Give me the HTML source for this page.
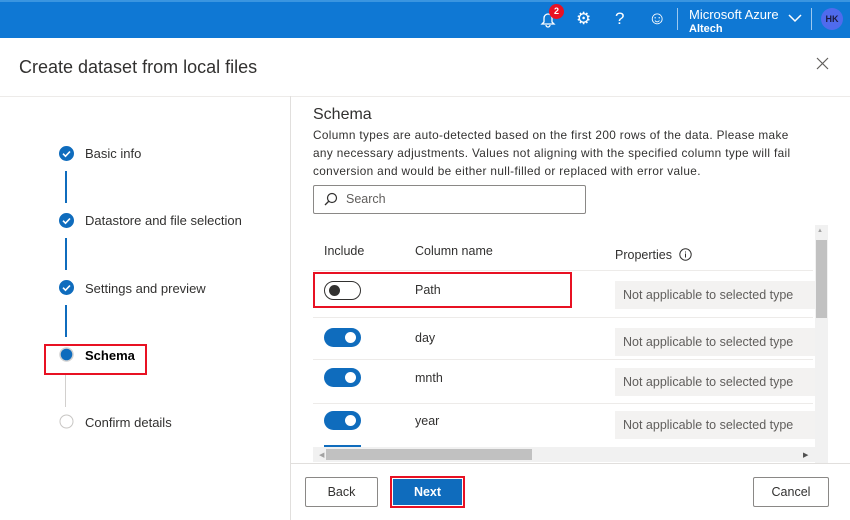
<!DOCTYPE html>
<html><head><style>
*{margin:0;padding:0;box-sizing:border-box}
body{width:850px;height:520px;position:relative;overflow:hidden;background:#fff;font-family:"Liberation Sans",sans-serif;color:#323130}
.a{position:absolute;white-space:nowrap}
.step{font-size:13px;color:#323130}
.vl{width:2px;background:#0f6cbd}
.tg{width:37px;height:19px;border-radius:10px;background:#0f6cbd}
.tg:after{content:"";position:absolute;right:5px;top:4px;width:11px;height:11px;border-radius:50%;background:#fff}
.pb{width:200px;height:28px;background:#f3f2f1;color:#605e5c;font-size:12.5px;line-height:28px;padding-left:8px}
.rl{height:1px;background:#edebe9;left:313px;width:500px}
.cn{font-size:12.5px;color:#323130}
</style></head><body>
<div class="a" style="left:0;top:0;width:850px;height:38px;background:#0f78d4"></div>
<div class="a" style="left:0;top:0;width:850px;height:2px;background:#3a95e0"></div>
<svg class="a" style="left:538px;top:10px" width="20" height="20" viewBox="0 0 20 20"><path d="M4 14h12l-2-2V8a4 4 0 0 0-8 0v4z M8 15a2 2 0 0 0 4 0" fill="none" stroke="#fff" stroke-width="1.3"/></svg>
<div class="a" style="left:549px;top:4px;width:15px;height:15px;border-radius:50%;background:#e81123;color:#fff;font-size:9px;font-weight:bold;text-align:center;line-height:15px">2</div>
<div class="a" style="left:576px;top:9px;color:#fff;font-size:17px">⚙</div>
<div class="a" style="left:615px;top:9px;color:#fff;font-size:17px">?</div>
<div class="a" style="left:648px;top:8px;color:#fff;font-size:18px">☺</div>
<div class="a" style="left:677px;top:8px;width:1px;height:22px;background:#9cc8ef"></div>
<div class="a" style="left:689px;top:7px;color:#fff;font-size:13px">Microsoft Azure</div>
<div class="a" style="left:689px;top:23px;color:#fff;font-size:11px;font-weight:bold">Altech</div>
<svg class="a" style="left:788px;top:13px" width="14" height="10"><path d="M1 2l6 6 6-6" fill="none" stroke="#fff" stroke-width="1.5"/></svg>
<div class="a" style="left:811px;top:8px;width:1px;height:22px;background:#9cc8ef"></div>
<div class="a" style="left:821px;top:8px;width:22px;height:22px;border-radius:50%;background:#4f6bed;color:#1b1a40;font-size:9px;font-weight:bold;text-align:center;line-height:22px">HK</div>

<div class="a" style="left:19px;top:57px;font-size:18px;color:#323130">Create dataset from local files</div>
<svg class="a" style="left:816px;top:57px" width="13" height="13"><path d="M1 1l11 11M12 1L1 12" stroke="#605e5c" stroke-width="1.2"/></svg>
<div class="a" style="left:0;top:96px;width:850px;height:1px;background:#edebe9"></div>
<div class="a" style="left:290px;top:96px;width:1px;height:424px;background:#e1dfdd"></div>

<svg class="a" style="left:59px;top:146px" width="15" height="15"><circle cx="7.5" cy="7.5" r="7.5" fill="#0f6cbd"/><path d="M4 7.7l2.5 2.5L11 5.5" fill="none" stroke="#fff" stroke-width="1.6"/></svg>
<div class="a step" style="left:85px;top:146px">Basic info</div>
<div class="a vl" style="left:65px;top:171px;height:32px"></div>
<svg class="a" style="left:59px;top:213px" width="15" height="15"><circle cx="7.5" cy="7.5" r="7.5" fill="#0f6cbd"/><path d="M4 7.7l2.5 2.5L11 5.5" fill="none" stroke="#fff" stroke-width="1.6"/></svg>
<div class="a step" style="left:85px;top:213px">Datastore and file selection</div>
<div class="a vl" style="left:65px;top:238px;height:32px"></div>
<svg class="a" style="left:59px;top:280px" width="15" height="15"><circle cx="7.5" cy="7.5" r="7.5" fill="#0f6cbd"/><path d="M4 7.7l2.5 2.5L11 5.5" fill="none" stroke="#fff" stroke-width="1.6"/></svg>
<div class="a step" style="left:85px;top:281px">Settings and preview</div>
<div class="a vl" style="left:65px;top:305px;height:32px"></div>
<svg class="a" style="left:59px;top:347px" width="15" height="15"><circle cx="7.5" cy="7.5" r="6.5" fill="#0f6cbd" stroke="#d0d0d0" stroke-width="1.5"/></svg>
<div class="a step" style="left:85px;top:348px;font-weight:bold;color:#000">Schema</div>
<div class="a" style="left:44px;top:344px;width:103px;height:31px;border:2px solid #e81123"></div>
<div class="a" style="left:65px;top:375px;width:1px;height:32px;background:#d2d0ce"></div>
<svg class="a" style="left:59px;top:414px" width="15" height="15"><circle cx="7.5" cy="7.5" r="6.5" fill="#fff" stroke="#c8c6c4" stroke-width="1"/></svg>
<div class="a step" style="left:85px;top:415px">Confirm details</div>

<div class="a" style="left:313px;top:106px;font-size:16px;color:#323130">Schema</div>
<div class="a" style="left:313px;top:126px;font-size:11.8px;line-height:18px;letter-spacing:0.35px;color:#323130">Column types are auto-detected based on the first 200 rows of the data. Please make<br>any necessary adjustments. Values not aligning with the specified column type will fail<br>conversion and would be either null-filled or replaced with error value.</div>
<div class="a" style="left:313px;top:185px;width:273px;height:29px;border:1px solid #8a8886;border-radius:2px"></div>
<svg class="a" style="left:324px;top:192px" width="14" height="14"><circle cx="8" cy="6" r="4.5" fill="none" stroke="#323130" stroke-width="1.2"/><path d="M5 9L1 13" stroke="#323130" stroke-width="1.3"/></svg>
<div class="a" style="left:346px;top:192px;font-size:12.5px;color:#605e5c">Search</div>

<div class="a cn" style="left:324px;top:244px">Include</div>
<div class="a cn" style="left:415px;top:244px">Column name</div>
<div class="a cn" style="left:615px;top:248px">Properties</div>
<svg class="a" style="left:679px;top:248px" width="13" height="13"><circle cx="6.5" cy="6.5" r="5.7" fill="none" stroke="#323130"/><path d="M6.5 5.5v4M6.5 3.5v1" stroke="#323130"/></svg>
<div class="a rl" style="top:270px"></div>
<div class="a" style="left:324px;top:281px;width:37px;height:19px;border:1px solid #323130;border-radius:10px"></div>
<div class="a" style="left:329px;top:285px;width:11px;height:11px;border-radius:50%;background:#323130"></div>
<div class="a cn" style="left:415px;top:283px">Path</div>
<div class="a" style="left:313px;top:272px;width:259px;height:36px;border:2px solid #e81123"></div>
<div class="a pb" style="left:615px;top:281px">Not applicable to selected type</div>
<div class="a rl" style="top:317px"></div>
<div class="a tg" style="left:324px;top:328px"></div>
<div class="a cn" style="left:415px;top:331px">day</div>
<div class="a pb" style="left:615px;top:328px">Not applicable to selected type</div>
<div class="a rl" style="top:359px"></div>
<div class="a tg" style="left:324px;top:368px"></div>
<div class="a cn" style="left:415px;top:371px">mnth</div>
<div class="a pb" style="left:615px;top:368px">Not applicable to selected type</div>
<div class="a rl" style="top:403px"></div>
<div class="a tg" style="left:324px;top:411px"></div>
<div class="a cn" style="left:415px;top:414px">year</div>
<div class="a pb" style="left:615px;top:411px">Not applicable to selected type</div>
<div class="a" style="left:324px;top:445px;width:37px;height:3px;background:#0f6cbd"></div>

<div class="a" style="left:313px;top:447px;width:502px;height:15px;background:#f1f1f1"></div>
<div class="a" style="left:326px;top:449px;width:206px;height:11px;background:#c1c1c1"></div>
<div class="a" style="left:319px;top:451px;font-size:7px;color:#a3a3a3">◀</div>
<div class="a" style="left:803px;top:451px;font-size:7px;color:#505050">▶</div>
<div class="a" style="left:815px;top:225px;width:13px;height:238px;background:#f1f1f1"></div>
<div class="a" style="left:816px;top:240px;width:11px;height:78px;background:#c1c1c1"></div>
<div class="a" style="left:817px;top:228px;font-size:6px;color:#a3a3a3">▲</div>

<div class="a" style="left:291px;top:463px;width:559px;height:1px;background:#e1dfdd"></div>
<div class="a" style="left:305px;top:477px;width:73px;height:30px;border:1px solid #8a8886;border-radius:2px;font-size:12.5px;text-align:center;line-height:28px">Back</div>
<div class="a" style="left:390px;top:476px;width:75px;height:32px;border:2px solid #e81123"></div>
<div class="a" style="left:393px;top:479px;width:69px;height:26px;background:#0f6cbd;color:#fff;font-size:12.5px;font-weight:bold;text-align:center;line-height:26px">Next</div>
<div class="a" style="left:753px;top:477px;width:76px;height:30px;border:1px solid #8a8886;border-radius:2px;font-size:12.5px;text-align:center;line-height:28px">Cancel</div>
</body></html>
